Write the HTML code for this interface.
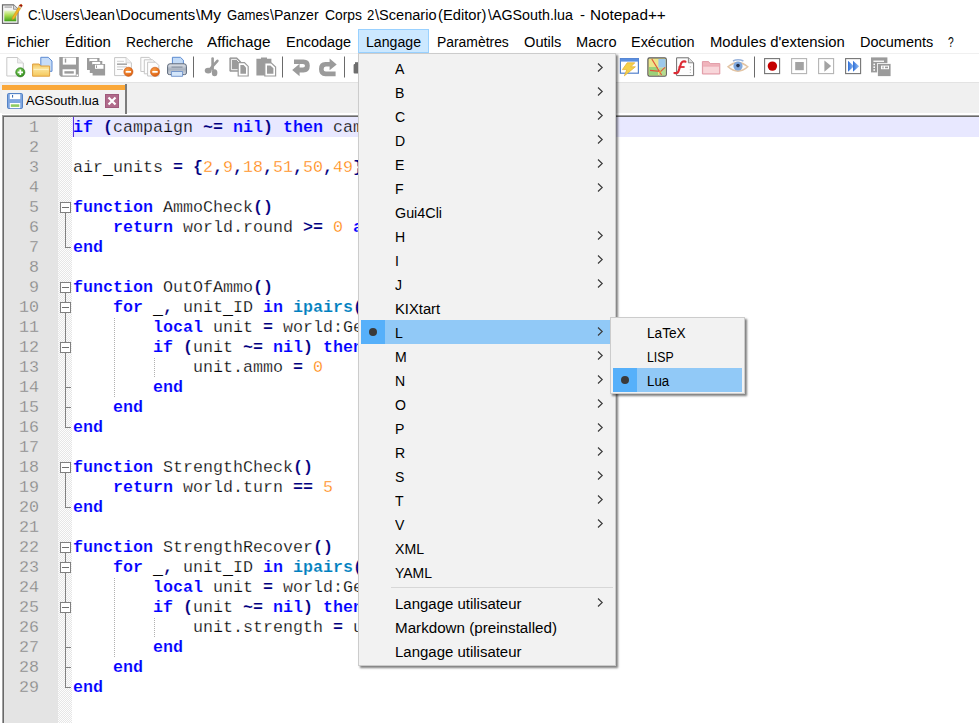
<!DOCTYPE html>
<html><head><meta charset="utf-8"><title>Notepad++</title>
<style>
html,body{margin:0;padding:0;background:#fff;}
body{width:979px;height:723px;overflow:hidden;position:relative;font-family:"Liberation Sans",sans-serif;}
.t{position:absolute;white-space:pre;font-family:"Liberation Sans",sans-serif;transform-origin:0 0;}
.abs{position:absolute;}
.code{position:absolute;left:73px;white-space:pre;font-family:"Liberation Mono",monospace;font-size:16.667px;line-height:20px;height:20px;color:#000;-webkit-text-stroke:0.25px #fff;}
.k,.o,.f{-webkit-text-stroke:0.15px #fff;}
.k{color:#0000ff;font-weight:bold;}
.o{color:#000080;font-weight:bold;}
.n{color:#ff8000;-webkit-text-stroke:0.3px #fff;}
.f{color:#0080c0;font-weight:bold;}
.u{position:relative;top:2px;-webkit-text-stroke:0 transparent;}
.l1{-webkit-text-stroke-color:#e8e8ff;}
.l1 span{-webkit-text-stroke-color:#e8e8ff;}
.code .u{-webkit-text-stroke-width:0;}
.ln{position:absolute;left:4px;width:35px;text-align:right;font-size:16.667px;line-height:20px;height:20px;color:#808080;font-family:"Liberation Mono",monospace;-webkit-text-stroke:0.3px #e4e4e4;}
.fb{position:absolute;left:60px;width:9px;height:9px;border:1px solid #808080;background:#fff;}
.fb i{position:absolute;left:1px;top:4px;width:7px;height:1px;background:#707070;}
.mi{position:absolute;}
</style></head><body>

<div class="abs" id="title" style="left:0;top:0;width:979px;height:29px;background:#fff"></div>
<span class="t" style="left:27.60px;top:6.96px;font-size:15.4px;line-height:15.4px;color:#000;transform:scaleX(0.8587);">C:\Users</span>
<span class="t" style="left:79.60px;top:6.96px;font-size:15.4px;line-height:15.4px;color:#000;transform:scaleX(0.9241);">\Jean</span>
<span class="t" style="left:115.50px;top:6.96px;font-size:15.4px;line-height:15.4px;color:#000;transform:scaleX(0.9646);">\Documents</span>
<span class="t" style="left:195.50px;top:6.96px;font-size:15.4px;line-height:15.4px;color:#000;transform:scaleX(1.0122);">\My</span>
<span class="t" style="left:227.00px;top:6.96px;font-size:15.4px;line-height:15.4px;color:#000;transform:scaleX(0.8547);">Games</span>
<span class="t" style="left:270.30px;top:6.96px;font-size:15.4px;line-height:15.4px;color:#000;transform:scaleX(0.9162);">\Panzer</span>
<span class="t" style="left:324.50px;top:6.96px;font-size:15.4px;line-height:15.4px;color:#000;transform:scaleX(0.9014);">Corps</span>
<span class="t" style="left:366.70px;top:6.96px;font-size:15.4px;line-height:15.4px;color:#000;transform:scaleX(0.8526);">2</span>
<span class="t" style="left:375.20px;top:6.96px;font-size:15.4px;line-height:15.4px;color:#000;transform:scaleX(0.9459);">\Scenario</span>
<span class="t" style="left:438.10px;top:6.96px;font-size:15.4px;line-height:15.4px;color:#000;transform:scaleX(0.9573);">(Editor)</span>
<span class="t" style="left:487.50px;top:6.96px;font-size:15.4px;line-height:15.4px;color:#000;transform:scaleX(0.9274);">\AGSouth.lua</span>
<span class="t" style="left:579.70px;top:6.96px;font-size:15.4px;line-height:15.4px;color:#000;transform:scaleX(0.9756);">-</span>
<span class="t" style="left:589.60px;top:6.96px;font-size:15.4px;line-height:15.4px;color:#000;transform:scaleX(0.9951);">Notepad++</span>
<div class="abs" style="left:0;top:53px;width:979px;height:1px;background:#f0f0f0"></div>
<div class="abs" style="left:358px;top:29px;width:69px;height:22px;border:1px solid #99d1ff;background:#cce8ff"></div>
<span class="t" style="left:7.40px;top:33.96px;font-size:15.4px;line-height:15.4px;color:#000;transform:scaleX(0.9205);">Fichier</span>
<span class="t" style="left:64.70px;top:33.96px;font-size:15.4px;line-height:15.4px;color:#000;transform:scaleX(0.9732);">Édition</span>
<span class="t" style="left:125.70px;top:33.96px;font-size:15.4px;line-height:15.4px;color:#000;transform:scaleX(0.9016);">Recherche</span>
<span class="t" style="left:207.00px;top:33.96px;font-size:15.4px;line-height:15.4px;color:#000;transform:scaleX(0.9955);">Affichage</span>
<span class="t" style="left:285.80px;top:33.96px;font-size:15.4px;line-height:15.4px;color:#000;transform:scaleX(0.9392);">Encodage</span>
<span class="t" style="left:366.00px;top:33.96px;font-size:15.4px;line-height:15.4px;color:#000;transform:scaleX(0.9179);">Langage</span>
<span class="t" style="left:436.80px;top:33.96px;font-size:15.4px;line-height:15.4px;color:#000;transform:scaleX(0.9026);">Paramètres</span>
<span class="t" style="left:523.50px;top:33.96px;font-size:15.4px;line-height:15.4px;color:#000;transform:scaleX(0.9506);">Outils</span>
<span class="t" style="left:576.00px;top:33.96px;font-size:15.4px;line-height:15.4px;color:#000;transform:scaleX(0.9470);">Macro</span>
<span class="t" style="left:631.00px;top:33.96px;font-size:15.4px;line-height:15.4px;color:#000;transform:scaleX(0.9394);">Exécution</span>
<span class="t" style="left:709.70px;top:33.96px;font-size:15.4px;line-height:15.4px;color:#000;transform:scaleX(0.9640);">Modules d'extension</span>
<span class="t" style="left:859.70px;top:33.96px;font-size:15.4px;line-height:15.4px;color:#000;transform:scaleX(0.9416);">Documents</span>
<span class="t" style="left:948.30px;top:33.96px;font-size:15.4px;line-height:15.4px;color:#000;transform:scaleX(0.6657);">?</span>
<div class="abs" style="left:0;top:82px;width:979px;height:31px;background:#f0f0f0"></div>
<div class="abs" style="left:0;top:82px;width:979px;height:1px;background:#e3e3e3"></div>
<div class="abs" style="left:2px;top:85px;width:123px;height:29px;background:#f2f2f2"></div>
<div class="abs" style="left:2px;top:85px;width:124px;height:5px;background:#faa83a"></div>
<div class="abs" style="left:125px;top:84px;width:2px;height:30px;background:#7c7c7c"></div>
<svg class="abs" style="left:0;top:0" width="979" height="115" viewBox="0 0 979 115">
<defs>
<linearGradient id="gGreen" x1="0" y1="0" x2="0" y2="1"><stop offset="0" stop-color="#e8f5c8"/><stop offset="0.45" stop-color="#a8dc50"/><stop offset="1" stop-color="#3fa018"/></linearGradient>
<linearGradient id="gFold" x1="0" y1="0" x2="0" y2="1"><stop offset="0" stop-color="#f3c35a"/><stop offset="0.4" stop-color="#fbe49a"/><stop offset="1" stop-color="#f6c85a"/></linearGradient>
<linearGradient id="gPr" x1="0" y1="0" x2="0" y2="1"><stop offset="0" stop-color="#e4e8ee"/><stop offset="0.5" stop-color="#a9b2bf"/><stop offset="1" stop-color="#d5dae2"/></linearGradient>
<radialGradient id="gOr" cx="0.4" cy="0.35" r="0.7"><stop offset="0" stop-color="#fba24a"/><stop offset="1" stop-color="#d8590c"/></radialGradient>
<radialGradient id="gGr" cx="0.4" cy="0.35" r="0.7"><stop offset="0" stop-color="#7fd05a"/><stop offset="1" stop-color="#2f8a1c"/></radialGradient>
<linearGradient id="gBl" x1="0" y1="0" x2="1" y2="0"><stop offset="0" stop-color="#2f6fd8"/><stop offset="1" stop-color="#9cc4f4"/></linearGradient>
</defs>
<!-- title icon -->
<g>
<path d="M2.5 4.8 H13.5 L18 9.3 V23.3 H2.5 Z" fill="#f4f4f4" stroke="#6a6a6a" stroke-width="1.2"/>
<path d="M13.5 4.8 V9.3 H18" fill="#d8d8d8" stroke="#8a8a8a" stroke-width="0.8"/>
<rect x="4.5" y="6.3" width="7.5" height="1.6" fill="#b8b8b8"/>
<rect x="4.3" y="10.5" width="12" height="10.8" fill="url(#gGreen)"/>
<path d="M21.3 4.2 L22.4 5.6 L14.2 18.8 L12.2 19.8 L12.4 17.6 L19.6 4.9 Z" fill="#f2b426" stroke="#c98a1a" stroke-width="0.5"/>
<path d="M19.6 4.9 L21.3 4.2 L22.4 5.6 L21.6 7 L19 6 Z" fill="#a01010"/>
<path d="M19 6 L21.6 7 L20.9 8.2 L18.3 7.2 Z" fill="#c9c9c9"/>
</g>
<!-- 1 new -->
<g>
<path d="M6.8 57.5 H17.5 L23.3 63 V76 H6.8 Z" fill="#fdfdfd" stroke="#c9c9c9" stroke-width="1"/>
<path d="M17.5 57.5 V63 H23.3" fill="#ececec" stroke="#cfcfcf" stroke-width="0.8"/>
<circle cx="20.3" cy="72.3" r="4.6" fill="url(#gGr)" stroke="#2d7a1c" stroke-width="0.6"/>
<path d="M20.3 69.6 V75 M17.6 72.3 H23" stroke="#fff" stroke-width="1.7"/>
</g>
<!-- 2 open -->
<g>
<path d="M40.8 57.3 H48.2 L52 61 V71.3 H40.8 Z" fill="#c6dcf8" stroke="#5c8ad2" stroke-width="1"/>
<path d="M32.6 64 H39.2 L40.6 66 H49.6 V76.2 H32.6 Z" fill="url(#gFold)" stroke="#dfa040" stroke-width="1"/>
<rect x="33.6" y="69" width="15" height="1" fill="#fdf0c0"/>
</g>
<!-- 3 save (disabled) -->
<g fill="#9b9b9b">
<path d="M59.3 57 H78.8 V76.7 H61 L59.3 75 Z"/>
<rect x="62.8" y="57.6" width="13.2" height="7" fill="#fff"/>
<rect x="64.8" y="58.6" width="1.4" height="4" />
<rect x="62.6" y="69.3" width="13.2" height="6.2" fill="#fff"/>
<rect x="64.4" y="71.2" width="9.4" height="2.4"/>
<rect x="76.5" y="74.4" width="1.6" height="1.6" fill="#fff"/>
</g>
<!-- 4 save all (disabled) -->
<g fill="#9b9b9b">
<rect x="87" y="58" width="12.5" height="12"/>
<rect x="89.3" y="58.8" width="8" height="2.6" fill="#fff"/>
<rect x="89.8" y="61" width="12.5" height="12"/>
<rect x="92.2" y="61.9" width="8" height="2.6" fill="#fff"/>
<rect x="92.6" y="64" width="12.5" height="11.5"/>
<rect x="95" y="64.8" width="8.5" height="4" fill="#fff"/>
<rect x="96" y="65.4" width="1" height="2.6"/>
</g>
<!-- 5 close -->
<g>
<path d="M114.6 57.6 H126 L131.4 62.8 V75.6 H114.6 Z" fill="#fdfdfd" stroke="#c6c6c6" stroke-width="1"/>
<path d="M126 57.6 V62.8 H131.4" fill="#eee" stroke="#cfcfcf" stroke-width="0.8"/>
<rect x="117" y="60.8" width="7" height="1" fill="#d0d0d0"/>
<rect x="117" y="63.4" width="10" height="1.6" fill="#a8a8a8"/>
<rect x="117" y="66.4" width="10" height="1" fill="#c8c8c8"/>
<rect x="117" y="69" width="6" height="1" fill="#c8c8c8"/>
<circle cx="128.4" cy="71.8" r="4.6" fill="url(#gOr)" stroke="#c8520c" stroke-width="0.5"/>
<rect x="125.7" y="71" width="5.4" height="1.7" fill="#fff"/>
</g>
<!-- 6 close all -->
<g>
<path d="M140.8 57.4 H149 L152.5 60.8 V71.5 H140.8 Z" fill="#fdfdfd" stroke="#c6c6c6" stroke-width="1"/>
<path d="M144.3 59.8 H152.5 L156 63.2 V73.8 H144.3 Z" fill="#fdfdfd" stroke="#c6c6c6" stroke-width="1"/>
<path d="M147.6 62.2 H155.6 L158.8 65.4 V76 H147.6 Z" fill="#fdfdfd" stroke="#c6c6c6" stroke-width="1"/>
<circle cx="155" cy="71.8" r="4.6" fill="url(#gOr)" stroke="#c8520c" stroke-width="0.5"/>
<rect x="152.3" y="71" width="5.4" height="1.7" fill="#fff"/>
</g>
<!-- 7 print -->
<g>
<path d="M172.4 66.5 V57.3 H180.4 L183.4 60.2 V66.5 Z" fill="#c3dbf7" stroke="#5d8bd0" stroke-width="1"/>
<path d="M167.6 66.2 Q167.6 63.8 170 63.8 H184 Q186.4 63.8 186.4 66.2 V73 Q186.4 74.6 184.6 74.6 H169.4 Q167.6 74.6 167.6 73 Z" fill="url(#gPr)" stroke="#5a6678" stroke-width="1"/>
<rect x="171.5" y="66.5" width="11" height="1.2" fill="#5a6678" opacity="0.55"/>
<path d="M171.4 71.5 H182.6 V76.3 H171.4 Z" fill="#d4e6fa" stroke="#6a8fc8" stroke-width="0.9"/>
</g>
<!-- separators -->
<g fill="#6a6a6a">
<rect x="193" y="56.5" width="1" height="21"/>
<rect x="282" y="56.5" width="1" height="21"/>
<rect x="344" y="56.5" width="1" height="21"/>
<rect x="754" y="56.5" width="1" height="21"/>
</g>
<!-- cut -->
<g fill="none" stroke="#9b9b9b" stroke-linecap="round">
<path d="M212.6 58.6 V69.4" stroke-width="2.6"/>
<path d="M217.4 60.8 L209.6 69.6" stroke-width="2.6"/>
<ellipse cx="208.2" cy="70.6" rx="2.3" ry="1.7" stroke-width="2.4" fill="#9b9b9b"/>
<ellipse cx="214.6" cy="72.8" rx="1.6" ry="2.3" stroke-width="2.4" fill="#9b9b9b"/>
</g>
<!-- copy -->
<g>
<path d="M229.9 57.9 H237 L240.6 61.4 V71.2 H229.9 Z" fill="#9b9b9b" stroke="#9b9b9b" stroke-width="1"/>
<path d="M231.4 59.4 H236.4 L239.1 62 V69.7 H231.4 Z" fill="none" stroke="#fff" stroke-width="0.9"/>
<path d="M238.2 62.6 H244.4 L248.2 66.4 V76 H238.2 Z" fill="#fff" stroke="#9b9b9b" stroke-width="1.2"/>
<path d="M240.4 65 H243.6 L246 67.6 V73.8 H240.4 Z" fill="#9b9b9b"/>
</g>
<!-- paste -->
<g>
<path d="M256.4 58.8 H261 V57.4 H267 V58.8 H271.4 V75.4 H256.4 Z" fill="#9b9b9b"/>
<path d="M264.8 63 H271.4 L275.6 67 V76 H264.8 Z" fill="#fff" stroke="#9b9b9b" stroke-width="1.2"/>
<path d="M267 65.4 H270.4 L273.4 68.2 V73.8 H267 Z" fill="#9b9b9b"/>
</g>
<!-- undo -->
<g fill="#9b9b9b">
<path d="M294 59.4 H303.4 Q309.8 59.4 309.8 65.8 Q309.8 72.4 303.4 72.4 H299.6 V76.2 L292.2 70 L299.6 63.8 V67.6 H303 Q305 67.6 305 65.8 Q305 64 303 64 H294 Z"/>
</g>
<!-- redo -->
<g fill="#9b9b9b">
<path d="M336.7 64.4 L329.6 58.6 V62 H325.4 Q319 62 319 69 Q319 76.2 325.4 76.2 H335.6 V71.6 H325.8 Q323.6 71.6 323.6 69.2 Q323.6 66.6 325.8 66.6 H329.6 V70.2 Z"/>
</g>
<!-- find (mostly hidden) -->
<g fill="#6e6e6e">
<rect x="353.6" y="64" width="6" height="9.4" rx="1"/>
<rect x="355" y="62.2" width="4" height="2.4"/>
</g>
<!-- user lang / launch (window + lightning) -->
<g>
<rect x="620.4" y="58.6" width="18" height="14.6" fill="#fff" stroke="#5582cc" stroke-width="1.2"/>
<rect x="620.4" y="58.6" width="18" height="3" fill="#5b8fe0"/>
<path d="M634.8 62.8 H627.2 L622.4 69.6 H626.8 L624.4 75.8 L635.4 66.8 H630.8 Z" fill="#f4d04a" stroke="#e4b43a" stroke-width="0.8"/>
</g>
<!-- doc map -->
<g>
<rect x="647.9" y="57.9" width="18.4" height="18.2" rx="1.6" fill="#ece58a" stroke="#5a5a5a" stroke-width="1.2"/>
<rect x="649" y="67" width="9" height="8.4" fill="#9bd27a"/>
<rect x="658.4" y="59" width="7.2" height="8.6" fill="#9cc8ea"/>
<rect x="659" y="68" width="6.6" height="7.4" fill="#b4dc90"/>
<path d="M651.8 59 L661.6 75 M665 67.4 L659.4 72.6 M650 70.4 L660 71.4" fill="none" stroke="#e2553c" stroke-width="1.2"/>
<circle cx="660" cy="72" r="1.1" fill="#f4a030"/>
</g>
<!-- function list -->
<g>
<path d="M676.6 57.8 H688.4 L693.6 62.8 V75.6 H676.6 Z" fill="#fdfdfd" stroke="#707070" stroke-width="1"/>
<path d="M688.4 57.8 V62.8 H693.6" fill="#dcdcdc" stroke="#707070" stroke-width="0.8"/>
<path d="M690.4 66 V73" stroke="#c8c8c8" stroke-width="1.2" stroke-dasharray="1.5 1.5"/>
<path d="M685.4 61.6 Q681.6 60.6 680.6 64.8 L678.6 71 Q677.8 73.8 674.4 73" fill="none" stroke="#dc2a34" stroke-width="2.2" stroke-linecap="round"/>
<path d="M678.6 67 H684.6" stroke="#dc2a34" stroke-width="1.8"/>
</g>
<!-- folder workspace (pink) -->
<g>
<path d="M702.4 61.6 H708.6 L710.2 63.6 H719.8 V74 H702.4 Z" fill="#f0b4bc" stroke="#e09aa6" stroke-width="1"/>
<path d="M703.2 66.4 H719 V73.2 H703.2 Z" fill="#f8d6da"/>
<path d="M703.2 66 H719" stroke="#e8a8b2" stroke-width="0.8"/>
</g>
<!-- monitoring eye -->
<g>
<path d="M728 66.8 Q738 58.4 747.8 66.8 Q738 75.4 728 66.8 Z" fill="#fbfbfb" stroke="#e2c4a4" stroke-width="1.5"/>
<circle cx="738" cy="66" r="4.6" fill="#80a8de"/>
<circle cx="738" cy="65.6" r="1.8" fill="#26344e"/>
<path d="M733 61 Q738 58.6 743.4 61" fill="none" stroke="#9ab4dc" stroke-width="1.6"/>
</g>
<!-- macro record -->
<g>
<rect x="764.6" y="58.6" width="15" height="15" fill="#fff" stroke="#747474" stroke-width="1.1"/>
<circle cx="772.4" cy="66.1" r="4.7" fill="#c40000"/>
<rect x="791.6" y="58.6" width="15" height="15" fill="#fff" stroke="#b4b4b4" stroke-width="1.1"/>
<rect x="795.2" y="62" width="8.6" height="8.2" fill="#a3a3a3"/>
<rect x="818.6" y="58.6" width="15" height="15" fill="#fff" stroke="#b4b4b4" stroke-width="1.1"/>
<path d="M824.4 60.4 V71.8 L831.2 66.1 Z" fill="#a3a3a3"/>
<rect x="845.6" y="58.6" width="15" height="15" fill="#fff" stroke="#747474" stroke-width="1.1"/>
<path d="M848 60.8 V71.8 L854 66.3 Z" fill="url(#gBl)"/>
<path d="M853 60.8 V71.8 L859.2 66.3 Z" fill="url(#gBl)"/>
</g>
<!-- save macro -->
<g fill="#9b9b9b">
<rect x="871" y="57.4" width="16.4" height="15"/>
<rect x="873.4" y="60.6" width="10.6" height="1.3" fill="#fff"/>
<rect x="873.4" y="63.6" width="1.6" height="1.6" fill="#fff"/>
<rect x="873.4" y="66.4" width="1.6" height="1.6" fill="#fff"/>
<rect x="873.4" y="69.2" width="1.6" height="1.6" fill="#fff"/>
<rect x="877.4" y="63.6" width="13.6" height="13" stroke="#fff" stroke-width="0.8"/>
<rect x="881" y="65.6" width="8" height="3.6" fill="#fff"/>
<rect x="882.4" y="66.4" width="1.2" height="2"/>
<rect x="885" y="66.6" width="3" height="1.6"/>
</g>
<!-- tab save icon -->
<g>
<rect x="7.5" y="93.5" width="15" height="15" rx="1.2" fill="#7ea6e0" stroke="#5583c6" stroke-width="1"/>
<rect x="9.8" y="94.2" width="10.4" height="4.9" fill="#fff"/>
<rect x="12" y="95" width="1.1" height="2.6" fill="#3f6fb8"/>
<rect x="9.8" y="103" width="10.4" height="5.2" fill="#fff"/>
<rect x="10.8" y="104.3" width="8.5" height="2.6" fill="#8fcc62"/>
</g>
</svg>

<span class="t " style="left:26.40px;top:94.30px;font-size:13px;line-height:13px;color:#000;transform:scaleX(0.9889);">AGSouth.lua</span>
<svg class="abs" style="left:105px;top:94px" width="14" height="14" viewBox="0 0 14 14"><rect width="14" height="14" fill="#b06a8a"/><rect x="0.5" y="0.5" width="13" height="13" fill="none" stroke="#a05a7c"/><path d="M3.5 3.5 L10.5 10.5 M10.5 3.5 L3.5 10.5" stroke="#fff" stroke-width="2.2"/></svg>
<div class="abs" style="left:2px;top:115px;width:977px;height:1px;background:#a0a0a0"></div>
<div class="abs" style="left:3px;top:116px;width:976px;height:1px;background:#696969"></div>
<div class="abs" style="left:2px;top:115px;width:1px;height:608px;background:#a0a0a0"></div>
<div class="abs" style="left:3px;top:116px;width:1px;height:607px;background:#696969"></div>
<div class="abs" style="left:4px;top:117px;width:54px;height:606px;background:#e4e4e4"></div>
<div class="abs" style="left:58px;top:117px;width:14px;height:606px;background:#f2f2f2 repeating-conic-gradient(#fdfdfd 0% 25%,#e6e6e6 0% 50%) 0 0/2px 2px"></div>
<div class="abs" style="left:72px;top:117px;width:907px;height:20px;background:#e8e8ff"></div>
<div class="abs" style="left:72.6px;top:117px;width:1.6px;height:20px;background:#5a30e0"></div>
<div class="ln" style="top:118px">1</div>
<div class="ln" style="top:138px">2</div>
<div class="ln" style="top:158px">3</div>
<div class="ln" style="top:178px">4</div>
<div class="ln" style="top:198px">5</div>
<div class="ln" style="top:218px">6</div>
<div class="ln" style="top:238px">7</div>
<div class="ln" style="top:258px">8</div>
<div class="ln" style="top:278px">9</div>
<div class="ln" style="top:298px">10</div>
<div class="ln" style="top:318px">11</div>
<div class="ln" style="top:338px">12</div>
<div class="ln" style="top:358px">13</div>
<div class="ln" style="top:378px">14</div>
<div class="ln" style="top:398px">15</div>
<div class="ln" style="top:418px">16</div>
<div class="ln" style="top:438px">17</div>
<div class="ln" style="top:458px">18</div>
<div class="ln" style="top:478px">19</div>
<div class="ln" style="top:498px">20</div>
<div class="ln" style="top:518px">21</div>
<div class="ln" style="top:538px">22</div>
<div class="ln" style="top:558px">23</div>
<div class="ln" style="top:578px">24</div>
<div class="ln" style="top:598px">25</div>
<div class="ln" style="top:618px">26</div>
<div class="ln" style="top:638px">27</div>
<div class="ln" style="top:658px">28</div>
<div class="ln" style="top:678px">29</div>
<div class="code l1" style="top:118px"><span class="k">if</span> <span class="o">(</span>campaign <span class="o">~=</span> <span class="k">nil</span><span class="o">)</span> <span class="k">then</span> campaign</div>
<div class="code" style="top:158px">air<span class="u">_</span>units <span class="o">=</span> <span class="o">{</span><span class="n">2</span><span class="o">,</span><span class="n">9</span><span class="o">,</span><span class="n">18</span><span class="o">,</span><span class="n">51</span><span class="o">,</span><span class="n">50</span><span class="o">,</span><span class="n">49</span><span class="o">}</span></div>
<div class="code" style="top:198px"><span class="k">function</span> AmmoCheck<span class="o">()</span></div>
<div class="code" style="top:218px">    <span class="k">return</span> world.round <span class="o">&gt;=</span> <span class="n">0</span> <span class="k">and</span></div>
<div class="code" style="top:238px"><span class="k">end</span></div>
<div class="code" style="top:278px"><span class="k">function</span> OutOfAmmo<span class="o">()</span></div>
<div class="code" style="top:298px">    <span class="k">for</span> <span class="u">_</span><span class="o">,</span> unit<span class="u">_</span>ID <span class="k">in</span> <span class="f">ipairs</span><span class="o">(</span></div>
<div class="code" style="top:318px">        <span class="k">local</span> unit <span class="o">=</span> world:GetUnit</div>
<div class="code" style="top:338px">        <span class="k">if</span> <span class="o">(</span>unit <span class="o">~=</span> <span class="k">nil</span><span class="o">)</span> <span class="k">then</span></div>
<div class="code" style="top:358px">            unit.ammo <span class="o">=</span> <span class="n">0</span></div>
<div class="code" style="top:378px">        <span class="k">end</span></div>
<div class="code" style="top:398px">    <span class="k">end</span></div>
<div class="code" style="top:418px"><span class="k">end</span></div>
<div class="code" style="top:458px"><span class="k">function</span> StrengthCheck<span class="o">()</span></div>
<div class="code" style="top:478px">    <span class="k">return</span> world.turn <span class="o">==</span> <span class="n">5</span></div>
<div class="code" style="top:498px"><span class="k">end</span></div>
<div class="code" style="top:538px"><span class="k">function</span> StrengthRecover<span class="o">()</span></div>
<div class="code" style="top:558px">    <span class="k">for</span> <span class="u">_</span><span class="o">,</span> unit<span class="u">_</span>ID <span class="k">in</span> <span class="f">ipairs</span><span class="o">(</span></div>
<div class="code" style="top:578px">        <span class="k">local</span> unit <span class="o">=</span> world:GetUnit</div>
<div class="code" style="top:598px">        <span class="k">if</span> <span class="o">(</span>unit <span class="o">~=</span> <span class="k">nil</span><span class="o">)</span> <span class="k">then</span></div>
<div class="code" style="top:618px">            unit.strength <span class="o">=</span> unit</div>
<div class="code" style="top:638px">        <span class="k">end</span></div>
<div class="code" style="top:658px">    <span class="k">end</span></div>
<div class="code" style="top:678px"><span class="k">end</span></div>
<div class="abs" style="left:65px;top:207px;width:1px;height:40px;background:#808080"></div>
<div class="abs" style="left:65px;top:247px;width:6px;height:1px;background:#808080"></div>
<div class="abs" style="left:65px;top:287px;width:1px;height:140px;background:#808080"></div>
<div class="abs" style="left:65px;top:427px;width:6px;height:1px;background:#808080"></div>
<div class="abs" style="left:65px;top:467px;width:1px;height:40px;background:#808080"></div>
<div class="abs" style="left:65px;top:507px;width:6px;height:1px;background:#808080"></div>
<div class="abs" style="left:65px;top:547px;width:1px;height:140px;background:#808080"></div>
<div class="abs" style="left:65px;top:687px;width:6px;height:1px;background:#808080"></div>
<div class="abs" style="left:65px;top:387px;width:6px;height:1px;background:#808080"></div>
<div class="abs" style="left:65px;top:407px;width:6px;height:1px;background:#808080"></div>
<div class="abs" style="left:65px;top:647px;width:6px;height:1px;background:#808080"></div>
<div class="abs" style="left:65px;top:667px;width:6px;height:1px;background:#808080"></div>
<div class="fb" style="top:202px"><i></i></div>
<div class="fb" style="top:282px"><i></i></div>
<div class="fb" style="top:302px"><i></i></div>
<div class="fb" style="top:342px"><i></i></div>
<div class="fb" style="top:462px"><i></i></div>
<div class="fb" style="top:542px"><i></i></div>
<div class="fb" style="top:562px"><i></i></div>
<div class="fb" style="top:602px"><i></i></div>
<div class="abs" style="left:114px;top:318px;width:1px;height:79px;background:repeating-linear-gradient(to bottom,#b0b0b0 0,#b0b0b0 1px,transparent 1px,transparent 2px)"></div>
<div class="abs" style="left:154px;top:358px;width:1px;height:19px;background:repeating-linear-gradient(to bottom,#b0b0b0 0,#b0b0b0 1px,transparent 1px,transparent 2px)"></div>
<div class="abs" style="left:114px;top:578px;width:1px;height:79px;background:repeating-linear-gradient(to bottom,#b0b0b0 0,#b0b0b0 1px,transparent 1px,transparent 2px)"></div>
<div class="abs" style="left:154px;top:618px;width:1px;height:19px;background:repeating-linear-gradient(to bottom,#b0b0b0 0,#b0b0b0 1px,transparent 1px,transparent 2px)"></div>
<div class="abs" style="left:358px;top:53px;width:256px;height:611px;border:1px solid #cccccc;background:#f2f2f2;box-shadow:2px 2px 2px rgba(0,0,0,0.5)"></div>
<span class="t " style="left:395.00px;top:60.55px;font-size:15.3px;line-height:15.3px;color:#000;transform:scaleX(0.9200);">A</span>
<svg class="abs" style="left:597px;top:62.2px" width="7" height="11" viewBox="0 0 7 11"><path d="M1 1.5 L5.2 5.5 L1 9.5" fill="none" stroke="#3a3a3a" stroke-width="1.15"/></svg>
<span class="t " style="left:395.00px;top:84.55px;font-size:15.3px;line-height:15.3px;color:#000;transform:scaleX(0.9200);">B</span>
<svg class="abs" style="left:597px;top:86.2px" width="7" height="11" viewBox="0 0 7 11"><path d="M1 1.5 L5.2 5.5 L1 9.5" fill="none" stroke="#3a3a3a" stroke-width="1.15"/></svg>
<span class="t " style="left:395.00px;top:108.55px;font-size:15.3px;line-height:15.3px;color:#000;transform:scaleX(0.9200);">C</span>
<svg class="abs" style="left:597px;top:110.2px" width="7" height="11" viewBox="0 0 7 11"><path d="M1 1.5 L5.2 5.5 L1 9.5" fill="none" stroke="#3a3a3a" stroke-width="1.15"/></svg>
<span class="t " style="left:395.00px;top:132.55px;font-size:15.3px;line-height:15.3px;color:#000;transform:scaleX(0.9200);">D</span>
<svg class="abs" style="left:597px;top:134.2px" width="7" height="11" viewBox="0 0 7 11"><path d="M1 1.5 L5.2 5.5 L1 9.5" fill="none" stroke="#3a3a3a" stroke-width="1.15"/></svg>
<span class="t " style="left:395.00px;top:156.55px;font-size:15.3px;line-height:15.3px;color:#000;transform:scaleX(0.9200);">E</span>
<svg class="abs" style="left:597px;top:158.2px" width="7" height="11" viewBox="0 0 7 11"><path d="M1 1.5 L5.2 5.5 L1 9.5" fill="none" stroke="#3a3a3a" stroke-width="1.15"/></svg>
<span class="t " style="left:395.00px;top:180.55px;font-size:15.3px;line-height:15.3px;color:#000;transform:scaleX(0.9200);">F</span>
<svg class="abs" style="left:597px;top:182.2px" width="7" height="11" viewBox="0 0 7 11"><path d="M1 1.5 L5.2 5.5 L1 9.5" fill="none" stroke="#3a3a3a" stroke-width="1.15"/></svg>
<span class="t " style="left:395.00px;top:204.55px;font-size:15.3px;line-height:15.3px;color:#000;transform:scaleX(0.9371);">Gui4Cli</span>
<span class="t " style="left:395.00px;top:228.55px;font-size:15.3px;line-height:15.3px;color:#000;transform:scaleX(0.9200);">H</span>
<svg class="abs" style="left:597px;top:230.2px" width="7" height="11" viewBox="0 0 7 11"><path d="M1 1.5 L5.2 5.5 L1 9.5" fill="none" stroke="#3a3a3a" stroke-width="1.15"/></svg>
<span class="t " style="left:395.00px;top:252.55px;font-size:15.3px;line-height:15.3px;color:#000;transform:scaleX(0.9200);">I</span>
<svg class="abs" style="left:597px;top:254.2px" width="7" height="11" viewBox="0 0 7 11"><path d="M1 1.5 L5.2 5.5 L1 9.5" fill="none" stroke="#3a3a3a" stroke-width="1.15"/></svg>
<span class="t " style="left:395.00px;top:276.55px;font-size:15.3px;line-height:15.3px;color:#000;transform:scaleX(0.9200);">J</span>
<svg class="abs" style="left:597px;top:278.2px" width="7" height="11" viewBox="0 0 7 11"><path d="M1 1.5 L5.2 5.5 L1 9.5" fill="none" stroke="#3a3a3a" stroke-width="1.15"/></svg>
<span class="t " style="left:395.00px;top:300.55px;font-size:15.3px;line-height:15.3px;color:#000;transform:scaleX(0.9646);">KIXtart</span>
<div class="abs" style="left:361px;top:320px;width:253px;height:24px;background:#91c9f7"></div>
<div class="abs" style="left:361px;top:320px;width:24px;height:24px;background:#56b0fa"></div>
<div class="abs" style="left:369px;top:328px;width:8px;height:8px;border-radius:50%;background:#3a3a3a"></div>
<span class="t " style="left:395.00px;top:324.55px;font-size:15.3px;line-height:15.3px;color:#000;transform:scaleX(0.9200);">L</span>
<svg class="abs" style="left:597px;top:326.2px" width="7" height="11" viewBox="0 0 7 11"><path d="M1 1.5 L5.2 5.5 L1 9.5" fill="none" stroke="#3a3a3a" stroke-width="1.15"/></svg>
<span class="t " style="left:395.00px;top:348.55px;font-size:15.3px;line-height:15.3px;color:#000;transform:scaleX(0.9200);">M</span>
<svg class="abs" style="left:597px;top:350.2px" width="7" height="11" viewBox="0 0 7 11"><path d="M1 1.5 L5.2 5.5 L1 9.5" fill="none" stroke="#3a3a3a" stroke-width="1.15"/></svg>
<span class="t " style="left:395.00px;top:372.55px;font-size:15.3px;line-height:15.3px;color:#000;transform:scaleX(0.9200);">N</span>
<svg class="abs" style="left:597px;top:374.2px" width="7" height="11" viewBox="0 0 7 11"><path d="M1 1.5 L5.2 5.5 L1 9.5" fill="none" stroke="#3a3a3a" stroke-width="1.15"/></svg>
<span class="t " style="left:395.00px;top:396.55px;font-size:15.3px;line-height:15.3px;color:#000;transform:scaleX(0.9200);">O</span>
<svg class="abs" style="left:597px;top:398.2px" width="7" height="11" viewBox="0 0 7 11"><path d="M1 1.5 L5.2 5.5 L1 9.5" fill="none" stroke="#3a3a3a" stroke-width="1.15"/></svg>
<span class="t " style="left:395.00px;top:420.55px;font-size:15.3px;line-height:15.3px;color:#000;transform:scaleX(0.9200);">P</span>
<svg class="abs" style="left:597px;top:422.2px" width="7" height="11" viewBox="0 0 7 11"><path d="M1 1.5 L5.2 5.5 L1 9.5" fill="none" stroke="#3a3a3a" stroke-width="1.15"/></svg>
<span class="t " style="left:395.00px;top:444.55px;font-size:15.3px;line-height:15.3px;color:#000;transform:scaleX(0.9200);">R</span>
<svg class="abs" style="left:597px;top:446.2px" width="7" height="11" viewBox="0 0 7 11"><path d="M1 1.5 L5.2 5.5 L1 9.5" fill="none" stroke="#3a3a3a" stroke-width="1.15"/></svg>
<span class="t " style="left:395.00px;top:468.55px;font-size:15.3px;line-height:15.3px;color:#000;transform:scaleX(0.9200);">S</span>
<svg class="abs" style="left:597px;top:470.2px" width="7" height="11" viewBox="0 0 7 11"><path d="M1 1.5 L5.2 5.5 L1 9.5" fill="none" stroke="#3a3a3a" stroke-width="1.15"/></svg>
<span class="t " style="left:395.00px;top:492.55px;font-size:15.3px;line-height:15.3px;color:#000;transform:scaleX(0.9200);">T</span>
<svg class="abs" style="left:597px;top:494.2px" width="7" height="11" viewBox="0 0 7 11"><path d="M1 1.5 L5.2 5.5 L1 9.5" fill="none" stroke="#3a3a3a" stroke-width="1.15"/></svg>
<span class="t " style="left:395.00px;top:516.55px;font-size:15.3px;line-height:15.3px;color:#000;transform:scaleX(0.9200);">V</span>
<svg class="abs" style="left:597px;top:518.2px" width="7" height="11" viewBox="0 0 7 11"><path d="M1 1.5 L5.2 5.5 L1 9.5" fill="none" stroke="#3a3a3a" stroke-width="1.15"/></svg>
<span class="t " style="left:395.00px;top:540.55px;font-size:15.3px;line-height:15.3px;color:#000;transform:scaleX(0.9220);">XML</span>
<span class="t " style="left:395.00px;top:564.55px;font-size:15.3px;line-height:15.3px;color:#000;transform:scaleX(0.9131);">YAML</span>
<div class="abs" style="left:391px;top:587px;width:222px;height:1px;background:#d7d7d7"></div>
<span class="t " style="left:395.00px;top:595.55px;font-size:15.3px;line-height:15.3px;color:#000;transform:scaleX(0.9786);">Langage utilisateur</span>
<svg class="abs" style="left:597px;top:597.2px" width="7" height="11" viewBox="0 0 7 11"><path d="M1 1.5 L5.2 5.5 L1 9.5" fill="none" stroke="#3a3a3a" stroke-width="1.15"/></svg>
<span class="t " style="left:395.00px;top:619.55px;font-size:15.3px;line-height:15.3px;color:#000;transform:scaleX(0.9925);">Markdown (preinstalled)</span>
<span class="t " style="left:395.00px;top:643.55px;font-size:15.3px;line-height:15.3px;color:#000;transform:scaleX(0.9786);">Langage utilisateur</span>
<div class="abs" style="left:610px;top:317px;width:133px;height:75px;border:1px solid #cccccc;background:#f2f2f2;box-shadow:2px 2px 2px rgba(0,0,0,0.5)"></div>
<div class="abs" style="left:613px;top:368px;width:129px;height:24px;background:#91c9f7"></div>
<div class="abs" style="left:613px;top:368px;width:24px;height:24px;background:#56b0fa"></div>
<div class="abs" style="left:621px;top:376px;width:8px;height:8px;border-radius:50%;background:#3a3a3a"></div>
<span class="t " style="left:647.30px;top:324.55px;font-size:15.3px;line-height:15.3px;color:#000;transform:scaleX(0.8923);">LaTeX</span>
<span class="t " style="left:647.30px;top:348.55px;font-size:15.3px;line-height:15.3px;color:#000;transform:scaleX(0.8051);">LISP</span>
<span class="t " style="left:647.30px;top:372.55px;font-size:15.3px;line-height:15.3px;color:#000;transform:scaleX(0.8698);">Lua</span>
</body></html>
